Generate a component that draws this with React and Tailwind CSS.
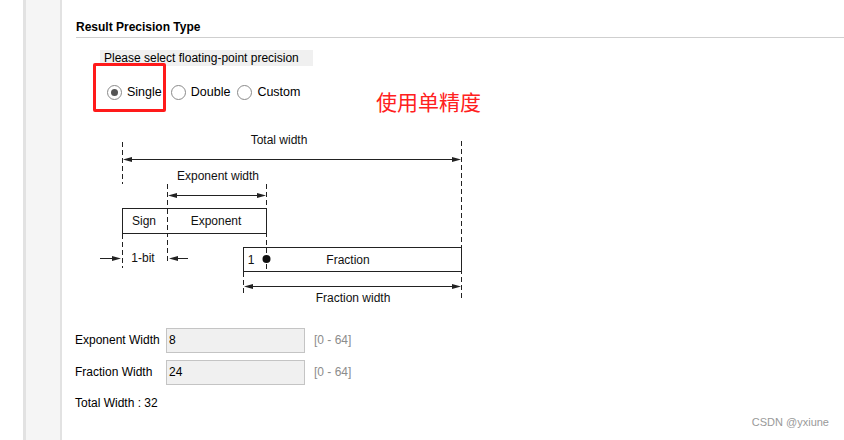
import React from "react";

const font = { fontFamily: '"Liberation Sans", Arial, "Noto Sans CJK SC", sans-serif' };

function Radio({ checked, label, className = "" }) {
  return (
    <label className={`flex items-center gap-[5px] ${className}`}>
      <span className="w-[15px] h-[15px] rounded-full border border-[#8a8a8a] bg-white flex items-center justify-center">
        {checked && <span className="w-[7px] h-[7px] rounded-full bg-[#555]" />}
      </span>
      <span className="text-[12.5px] leading-[16px] text-black">{label}</span>
    </label>
  );
}

function Arrow({ x1, x2, y }) {
  return (
    <g>
      <line x1={x1 + 6} y1={y} x2={x2 - 6} y2={y} stroke="#222" strokeWidth="1" />
      <polygon points={`${x1},${y} ${x1 + 9},${y - 2.5} ${x1 + 9},${y + 2.5}`} fill="#222" />
      <polygon points={`${x2},${y} ${x2 - 9},${y - 2.5} ${x2 - 9},${y + 2.5}`} fill="#222" />
    </g>
  );
}

function Dash({ x, y1, y2 }) {
  return <line x1={x} y1={y1} x2={x} y2={y2} stroke="#222" strokeWidth="1" strokeDasharray="5 3" />;
}

function Diagram() {
  // drawn in page coordinates offset by (95, 125)
  const ox = 95;
  const oy = 125;
  const t = { fontFamily: '"Liberation Sans", Arial, sans-serif', fontSize: 12, fill: "#111" };
  return (
    <svg width="380" height="185" viewBox={`${ox} ${oy} 380 185`} className="block">
      <text x="279" y="144" textAnchor="middle" style={t}>Total width</text>
      <Dash x={122.5} y1={142} y2={184} />
      <Dash x={461.5} y1={141} y2={298} />
      <Arrow x1={123} x2={461} y={159.5} />

      <text x="218" y="180" textAnchor="middle" style={t}>Exponent width</text>
      <Dash x={167.5} y1={184} y2={263} />
      <Dash x={266.5} y1={184} y2={262} />
      <Arrow x1={168} x2={266} y={195.5} />

      <rect x="122.5" y="208.5" width="144" height="25" fill="white" stroke="#222" strokeWidth="1" />
      <Dash x={167.5} y1={209} y2={233} />
      <text x="144" y="225" textAnchor="middle" style={t}>Sign</text>
      <text x="216" y="225" textAnchor="middle" style={t}>Exponent</text>

      <Dash x={122.5} y1={234} y2={268} />
      <text x="143" y="262" textAnchor="middle" style={t}>1-bit</text>
      <line x1="100" y1="258.5" x2="114" y2="258.5" stroke="#222" />
      <polygon points="121,258.5 112,256 112,261" fill="#222" />
      <line x1="176" y1="258.5" x2="188" y2="258.5" stroke="#222" />
      <polygon points="169,258.5 178,256 178,261" fill="#222" />

      <rect x="243.5" y="247.5" width="218" height="24" fill="white" stroke="#222" strokeWidth="1" />
      <Dash x={266.5} y1={248} y2={271} />
      <text x="251" y="264" textAnchor="middle" style={t}>1</text>
      <circle cx="266.5" cy="259" r="4" fill="#111" />
      <text x="348" y="264" textAnchor="middle" style={t}>Fraction</text>

      <Dash x={243.5} y1={272} y2={296} />
      <Arrow x1={244} x2={461} y={286.5} />
      <text x="353" y="302" textAnchor="middle" style={t}>Fraction width</text>
    </svg>
  );
}

function Field({ label, value }) {
  return (
    <div className="flex items-center h-[26px]">
      <span className="w-[91px] text-[12px] text-black">{label}</span>
      <div className="w-[139px] h-[25px] bg-[#f0f0f0] border border-[#c4c4c4] pl-[2px] flex items-center text-[12px] text-black">
        {value}
      </div>
      <span className="ml-[9px] text-[12px] text-[#8c8c8c]">[0 - 64]</span>
    </div>
  );
}

export default function App() {
  return (
    <div className="w-[844px] h-[440px] flex bg-white overflow-hidden relative" style={font}>
      <div className="w-[23px] shrink-0" />
      <div className="w-[39px] shrink-0 bg-[#f5f5f5] border-l-[3px] border-r-[2px] border-[#e2e2e2]" />
      <div className="flex-1 pl-[14px] pt-[19px] relative">
        <div className="text-[12px] font-bold leading-[16px] pb-[2px] border-b border-[#cfcfcf] text-black">
          Result Precision Type
        </div>
        <div className="ml-[24px] mt-[12px] w-[213px] h-[16px] bg-[#f0f0f0] pl-[4px] text-[12px] leading-[16px] text-black">
          Please select floating-point precision
        </div>
        <div className="relative flex items-center h-[16px] ml-[31px] mt-[18px]">
          <div className="relative flex items-center">
            <Radio checked label="Single" />
            <div className="absolute left-[-14px] top-[-21px] w-[73px] h-[49px] border-[3px] border-[#ff1a1a] rounded-[2px]" />
          </div>
          <Radio label="Double" className="ml-[9px]" />
          <Radio label="Custom" className="ml-[7px]" />
          <span
            className="absolute left-[269px] top-[4px] text-[21px] leading-[26px] text-[#ff2020] whitespace-nowrap"
            style={{ fontFamily: '"Noto Sans CJK SC", sans-serif' }}
          >
            使用单精度
          </span>
        </div>
        <div className="ml-[19px] mt-[25px]">
          <Diagram />
        </div>
        <div className="flex flex-col gap-[6px] ml-[-1px] mt-[17px]">
          <Field label="Exponent Width" value="8" />
          <Field label="Fraction Width" value="24" />
        </div>
        <div className="mt-[9px] ml-[-1px] text-[12px] text-black">Total Width : 32</div>
        <div className="absolute right-[15px] bottom-[10px] text-[11px] text-[#999]">CSDN @yxiune</div>
      </div>
    </div>
  );
}
